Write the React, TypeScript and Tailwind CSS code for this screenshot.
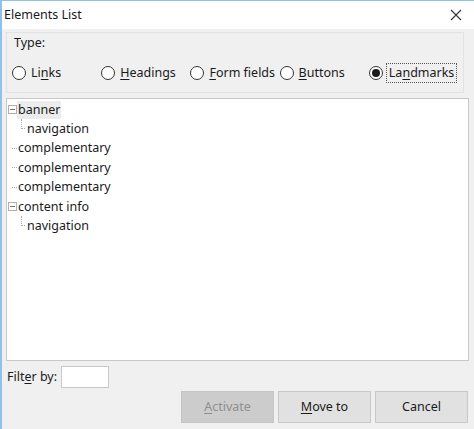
import { useState } from "react"

const types = [
  { label: "Links", key: 2 },
  { label: "Headings", key: 0 },
  { label: "Form fields", key: 0 },
  { label: "Buttons", key: 0 },
  { label: "Landmarks", key: 2 },
]

type Node = { name: string; children?: string[] }

const tree: Node[] = [
  { name: "banner", children: ["navigation"] },
  { name: "complementary" },
  { name: "complementary" },
  { name: "complementary" },
  { name: "content info", children: ["navigation"] },
]

function Underlined({ text, at }: { text: string; at: number }) {
  return (
    <span>
      {text.slice(0, at)}
      <span className="underline underline-offset-2">{text[at]}</span>
      {text.slice(at + 1)}
    </span>
  )
}

function Radio({ checked }: { checked: boolean }) {
  return (
    <span className="w-[14px] h-[14px] rounded-full border border-[#333] bg-white flex items-center justify-center shrink-0">
      {checked && <span className="w-[8px] h-[8px] rounded-full bg-[#1a1a1a]" />}
    </span>
  )
}

export default function App() {
  const [selected, setSelected] = useState(4)
  const [filter, setFilter] = useState("")

  return (
    <div
      className="w-[474px] h-[429px] bg-[#f0f0f0] border-l-2 border-t border-[#8cc2ee] flex flex-col text-[12.5px] text-[#1a1a1a]"
      style={{ fontFamily: '"Noto Sans", "Open Sans", sans-serif' }}
    >
      {/* title bar */}
      <div className="h-[28px] bg-white flex items-center justify-between pl-[2px] pr-[12px] shrink-0">
        <span className="text-[12.5px]">Elements List</span>
        <svg width="12" height="12" viewBox="0 0 12 12" className="text-[#333]">
          <path d="M1 1 L11 11 M11 1 L1 11" stroke="currentColor" strokeWidth="1.1" />
        </svg>
      </div>

      <div className="flex-1 flex flex-col pl-[4px] pr-[4px] pt-[3px]">
        {/* type group */}
        <div className="border border-[#e2e2e2] mr-[6px] h-[61px] px-[5px]">
          <div className="leading-[20px] pl-[2px]">Type:</div>
          <div className="flex mt-[10px]">
            {types.map((t, i) => (
              <button
                key={t.label}
                onClick={() => setSelected(i)}
                className="w-[91px] flex items-center gap-[3px] text-left"
              >
                <Radio checked={selected === i} />
                <span
                  className={
                    selected === i
                      ? "border border-dotted border-[#555] px-[2px] leading-[18px]"
                      : "px-[1px] border border-transparent leading-[18px]"
                  }
                >
                  <Underlined text={t.label} at={t.key} />
                </span>
              </button>
            ))}
          </div>
        </div>

        {/* tree */}
        <div className="mt-[5px] mr-[1px] h-[263px] bg-white border border-[#c8c8c8] pt-[1px]">
          {tree.map((n, i) => (
            <div key={i}>
              <div className="h-[19.4px] flex items-center">
                <span className="w-[10px] flex justify-center items-center h-full">
                  {n.children ? (
                    <span className="w-[9px] h-[9px] border border-[#b0b0b0] bg-white flex items-center justify-center">
                      <span className="w-[5px] h-px bg-[#777]" />
                    </span>
                  ) : (
                    <span className="flex items-center w-full h-full">
                      <span className="ml-[5px] w-[5px] border-t border-dotted border-[#aaa]" />
                    </span>
                  )}
                </span>
                <span
                  className={i === 0 ? "bg-[#ececec] px-[1px] leading-[18px]" : "px-[1px] leading-[18px]"}
                >
                  {n.name}
                </span>
              </div>
              {n.children?.map((c, j) => (
                <div key={j} className="h-[19.4px] flex items-center">
                  <span className="w-[19px] h-full flex items-start">
                    <span className="ml-[14px] w-[4px] h-[10px] border-l border-b border-dotted border-[#aaa]" />
                  </span>
                  <span className="px-[1px] leading-[18px]">{c}</span>
                </div>
              ))}
            </div>
          ))}
        </div>

        {/* filter */}
        <div className="flex items-center mt-[5px] h-[22px] pl-[1px]">
          <span className="mr-[4px]">
            <Underlined text="Filter by:" at={4} />
          </span>
          <input
            value={filter}
            onChange={(e) => setFilter(e.target.value)}
            className="w-[48px] h-[22px] bg-white border border-[#c8c8c8] outline-none px-1"
          />
        </div>

        {/* buttons */}
        <div className="flex justify-end gap-[4px] mt-[3px] mr-[2px]">
          <button className="w-[93px] h-[32px] bg-[#cccccc] border border-[#c4c4c4] text-[#8f8f8f]">
            <Underlined text="Activate" at={0} />
          </button>
          <button className="w-[93px] h-[32px] bg-[#e1e1e1] border border-[#c8c8c8]">
            <Underlined text="Move to" at={0} />
          </button>
          <button className="w-[93px] h-[32px] bg-[#e1e1e1] border border-[#c8c8c8]">Cancel</button>
        </div>
      </div>
    </div>
  )
}
